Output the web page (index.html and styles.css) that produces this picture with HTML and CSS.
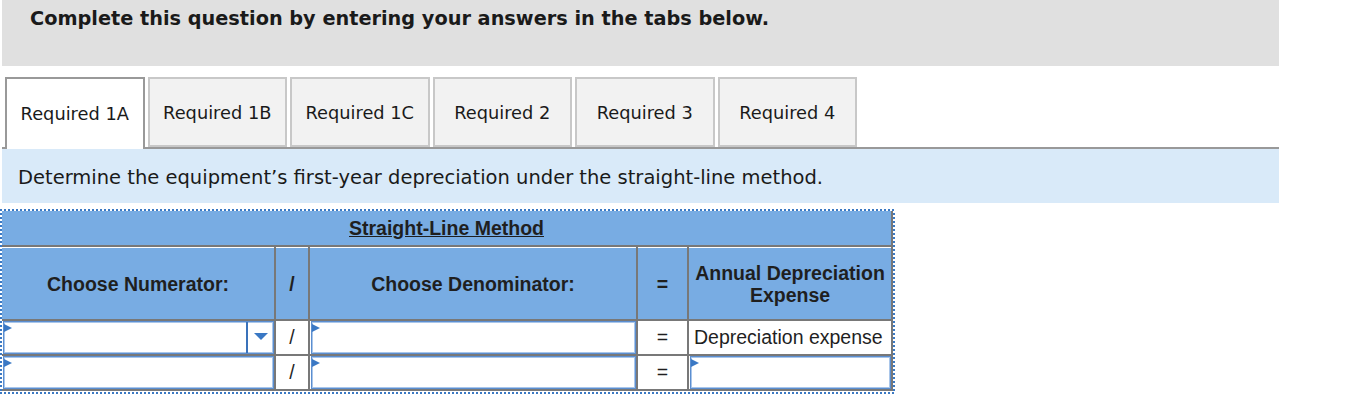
FILE: index.html
```html
<!DOCTYPE html>
<html>
<head>
<meta charset="utf-8">
<link rel="stylesheet" href="styles.css">
</head>
<body>
<div class="banner"><span class="banner-text">Complete this question by entering your answers in the tabs below.</span></div>

<div class="tabstrip">
  <div class="tab active">Required 1A</div>
  <div class="tab">Required 1B</div>
  <div class="tab">Required 1C</div>
  <div class="tab">Required 2</div>
  <div class="tab">Required 3</div>
  <div class="tab">Required 4</div>
</div>

<div class="prompt">Determine the equipment’s first-year depreciation under the straight-line method.</div>

<div class="sheet">
  <div class="grid">
    <div class="cell title"><span class="title-text">Straight-Line Method</span></div>

    <div class="cell head">Choose Numerator:</div>
    <div class="cell head">/</div>
    <div class="cell head">Choose Denominator:</div>
    <div class="cell head">=</div>
    <div class="cell head">Annual Depreciation<br>Expense</div>

    <div class="cell body"><div class="field select"><span class="flag"></span><span class="divider"></span><span class="arrow"></span></div></div>
    <div class="cell body sym">/</div>
    <div class="cell body"><div class="field"><span class="flag"></span></div></div>
    <div class="cell body sym">=</div>
    <div class="cell body label">Depreciation expense</div>

    <div class="cell body"><div class="field"><span class="flag"></span></div></div>
    <div class="cell body sym">/</div>
    <div class="cell body"><div class="field"><span class="flag"></span></div></div>
    <div class="cell body sym">=</div>
    <div class="cell body"><div class="field"><span class="flag"></span></div></div>
  </div>
</div>
</body>
</html>
```

FILE: styles.css
```css
* { box-sizing: border-box; }

body {
  margin: 0;
  background: #ffffff;
  font-family: "DejaVu Sans", Verdana, sans-serif;
  color: #1a1a1a;
}

.banner {
  margin-left: 2px;
  width: 1277px;
  height: 66px;
  background: #e0e0e0;
  padding: 7px 0 0 28px;
}

.banner-text {
  font-weight: bold;
  font-size: 19.3px;
  line-height: 24px;
}

.tabstrip {
  margin: 11px 0 0 2px;
  width: 1277px;
  height: 72px;
  border-bottom: 2px solid #999999;
  padding-left: 3px;
  display: flex;
  gap: 3px;
  align-items: flex-start;
}

.tab {
  width: 139.5px;
  height: 70px;
  background: #f2f2f2;
  border: 2px solid #c8c8c8;
  display: flex;
  align-items: center;
  justify-content: center;
  font-size: 17.8px;
  color: #1a1a1a;
  padding-top: 1px;
}

.tab.active {
  height: 72px;
  background: #ffffff;
  border-color: #999999;
  border-bottom: none;
  padding-bottom: 2px;
  position: relative;
  z-index: 1;
}

.prompt {
  margin-left: 2px;
  width: 1277px;
  height: 54px;
  background: #d9eaf9;
  padding: 2px 0 0 16px;
  display: flex;
  align-items: center;
  font-size: 19.5px;
  color: #1a1a1a;
}

.sheet {
  margin-top: 6px;
  width: 895px;
  padding: 2px 2px 3px 2px;
  background:
    repeating-linear-gradient(90deg, #3b79c3 0 2px, #ffffff 2px 4px) top left / 100% 2px no-repeat,
    repeating-linear-gradient(90deg, #3b79c3 0 2px, #ffffff 2px 4px) bottom left / 100% 2px no-repeat,
    repeating-linear-gradient(180deg, #3b79c3 0 2px, #ffffff 2px 4px) top left / 2px 100% no-repeat,
    repeating-linear-gradient(180deg, #3b79c3 0 2px, #ffffff 2px 4px) top right / 2px 100% no-repeat,
    #ffffff;
}

.grid {
  display: grid;
  grid-template-columns: 272px 32px 326px 49px 202px;
  grid-template-rows: 34px 72px 33px 33px;
  gap: 2px;
  background: #787878;
  padding: 0 2px 2px 0;
  font-family: "Liberation Sans", Arial, sans-serif;
  font-size: 19.5px;
  color: #1f1f1f;
}

.cell {
  display: flex;
  align-items: center;
  justify-content: center;
  text-align: center;
}

.title {
  grid-column: 1 / -1;
  background: #78ace3;
  font-weight: bold;
}

.title-text { text-decoration: underline; }

.head {
  background: #78ace3;
  font-weight: bold;
  line-height: 22px;
  box-shadow: inset 0 1px 0 #ffffff;
  padding-top: 1px;
}

.body { background: #ffffff; }

.label {
  justify-content: flex-start;
  padding-left: 5px;
}

.field {
  position: relative;
  width: 100%;
  height: 100%;
  margin-left: 1px;
  border: 1px solid #5b8ed0;
  box-shadow: inset 0 0 0 1px #a9c6ea;
  background: #ffffff;
}

.flag {
  position: absolute;
  left: 0;
  top: 2px;
  width: 0;
  height: 0;
  border-top: 4.5px solid transparent;
  border-bottom: 4.5px solid transparent;
  border-left: 8px solid #3a78c4;
}

.divider {
  position: absolute;
  left: 242px;
  top: 0;
  bottom: 0;
  width: 2px;
  background: #3a72ba;
}

.arrow {
  position: absolute;
  left: 250px;
  top: 11px;
  width: 0;
  height: 0;
  border-left: 7px solid transparent;
  border-right: 7px solid transparent;
  border-top: 7px solid #3a78c4;
}
```
